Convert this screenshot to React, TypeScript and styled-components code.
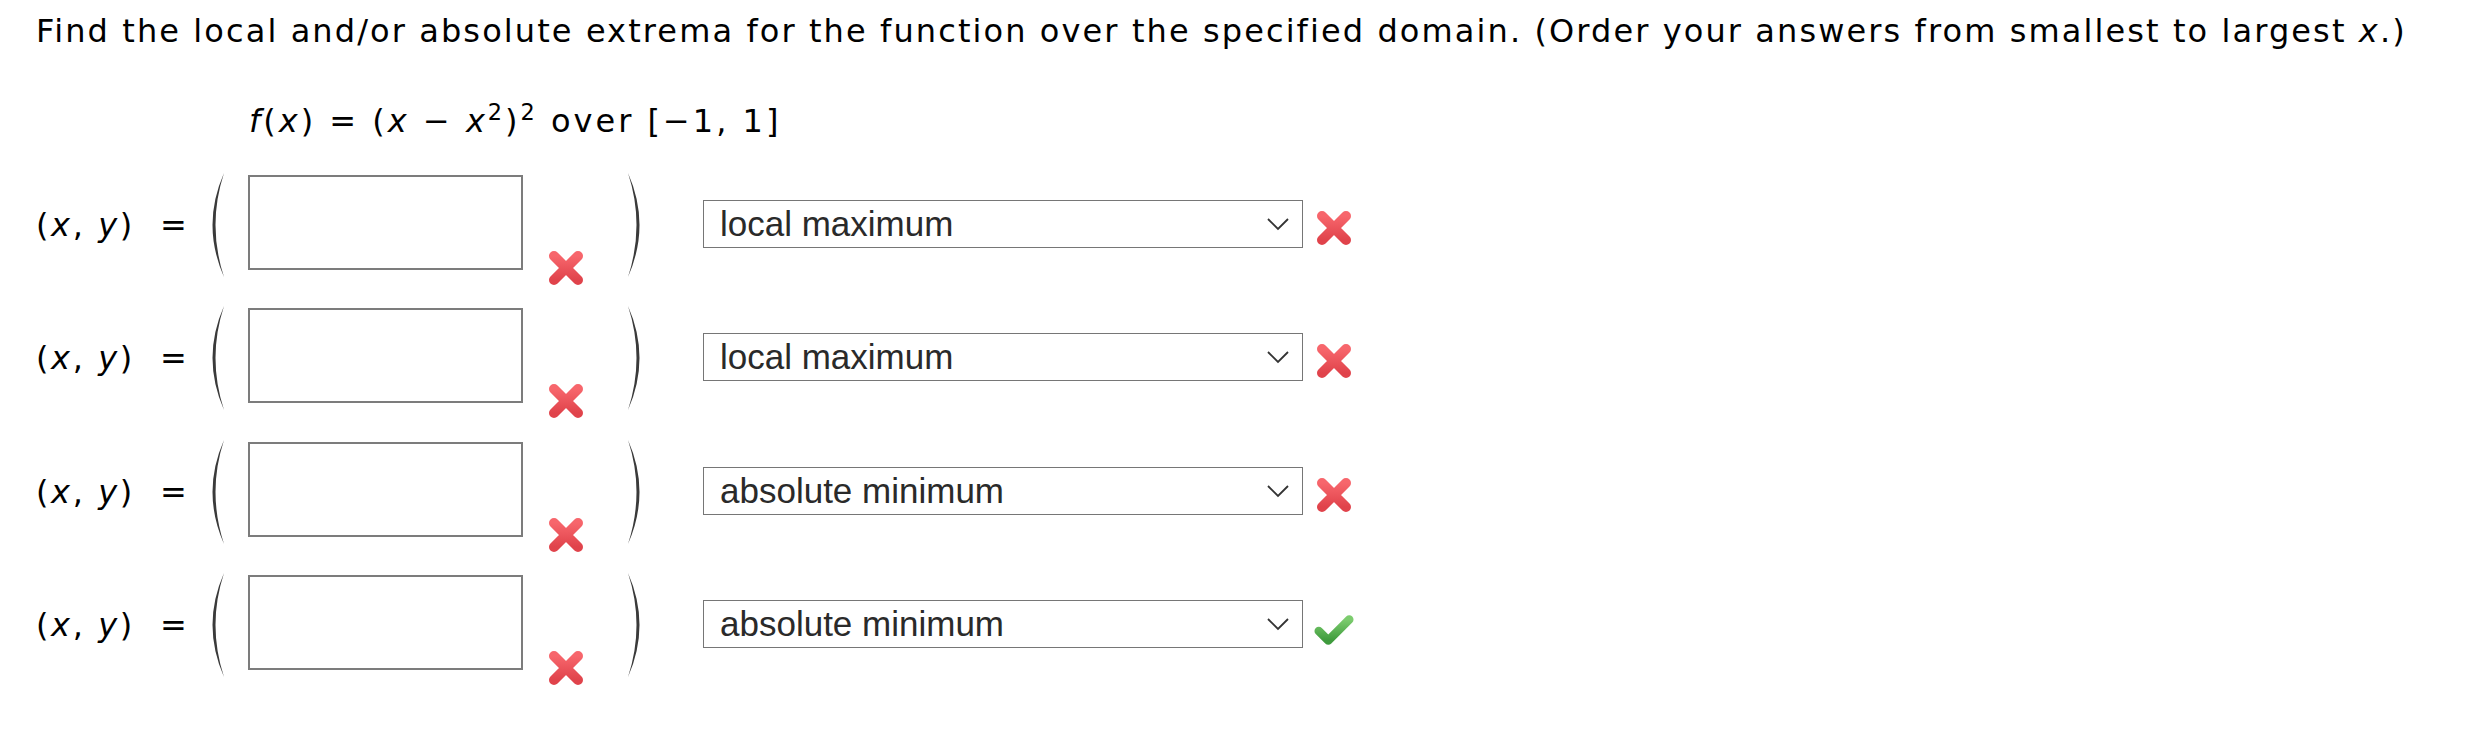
import React from 'react';
import styled, { createGlobalStyle } from 'styled-components';

const GlobalStyle = createGlobalStyle`
  html, body {
    margin: 0;
    padding: 0;
    background: #ffffff;
  }
  body {
    font-family: "DejaVu Sans", Verdana, sans-serif;
    color: #000;
  }
`;

const Page = styled.div`
  padding: 13px 0 0 36px;
  width: 2489px;
  height: 735px;
  box-sizing: border-box;
`;

const Question = styled.div`
  font-size: 32px;
  line-height: 36px;
  letter-spacing: 2.1px;
  white-space: nowrap;
`;

const Formula = styled.div`
  margin: 54px 0 0 213px;
  font-size: 32px;
  line-height: 36px;
  letter-spacing: 3px;
  white-space: nowrap;
`;

const Var = styled.i`
  font-style: italic;
`;

const Sup = styled.sup`
  font-size: 70%;
  line-height: 0;
  vertical-align: 0.55em;
`;

const Rows = styled.div`
  margin-top: 33px;
  display: flex;
  flex-direction: column;
  gap: 27.3px;
`;

const Row = styled.div`
  display: flex;
  align-items: flex-start;
  height: 106px;
`;

const PointLabel = styled.div`
  margin-top: 35px;
  width: 124px;
  font-size: 32px;
  line-height: 36px;
  letter-spacing: 2.6px;
  white-space: nowrap;
`;

const Equals = styled.div`
  margin-top: 35px;
  width: 42px;
  font-size: 32px;
  line-height: 36px;
`;

const Bracket = styled.div<{ $gap: number }>`
  display: block;
  flex: none;
  margin-left: ${(p) => p.$gap}px;
`;

const AnswerBox = styled.div`
  margin: 3px 0 0 22px;
  width: 275px;
  height: 95px;
  box-sizing: border-box;
  border: 2px solid #7c7c7c;
  background: #fff;
`;

const MarkSlot = styled.div<{ $top: number; $gap: number }>`
  margin: ${(p) => p.$top}px 0 0 ${(p) => p.$gap}px;
  width: 40px;
  height: 38px;
  flex: none;
  display: flex;
  align-items: center;
  justify-content: center;
`;

const Select = styled.div`
  margin: 28px 0 0 53px;
  width: 600px;
  height: 48px;
  box-sizing: border-box;
  border: 1.5px solid #767676;
  background: #fff;
  display: flex;
  align-items: center;
  justify-content: space-between;
  padding: 0 12px 0 16px;
  font-family: "Liberation Sans", Arial, sans-serif;
  font-size: 35px;
  color: #2a2a2a;
  white-space: nowrap;
`;

const Chevron = () => (
  <svg width="24" height="16" viewBox="0 0 24 16">
    <path d="M2 3 L12 13 L22 3" fill="none" stroke="#333" strokeWidth="1.8" />
  </svg>
);

const LeftParen = () => (
  <svg width="24" height="106" viewBox="0 0 24 106">
    <path d="M22 1 Q-1 53 22 105 Q5 53 22 1 Z" fill="#3a3a3a" />
  </svg>
);

const RightParen = () => (
  <svg width="24" height="106" viewBox="0 0 24 106">
    <path d="M2 1 Q25 53 2 105 Q19 53 2 1 Z" fill="#3a3a3a" />
  </svg>
);

const WrongMark = () => (
  <svg width="38" height="36" viewBox="0 0 38 36">
    <defs>
      <linearGradient id="xg" x1="0" y1="0" x2="0" y2="1">
        <stop offset="0" stopColor="#f7666c" />
        <stop offset="1" stopColor="#e0434b" />
      </linearGradient>
    </defs>
    <path d="M7 6 L31 30 M31 6 L7 30" stroke="url(#xg)" strokeWidth="10" strokeLinecap="round" fill="none" />
  </svg>
);

const RightMark = () => (
  <svg width="42" height="36" viewBox="0 0 42 36">
    <defs>
      <linearGradient id="cg" x1="0" y1="0" x2="0" y2="1">
        <stop offset="0" stopColor="#7ccc6e" />
        <stop offset="1" stopColor="#3f9b3d" />
      </linearGradient>
    </defs>
    <path d="M5 19 L15 29 L37 7" stroke="url(#cg)" strokeWidth="9" strokeLinecap="round" strokeLinejoin="round" fill="none" />
  </svg>
);

const answers = [
  { label: 'local maximum', correct: false },
  { label: 'local maximum', correct: false },
  { label: 'absolute minimum', correct: false },
  { label: 'absolute minimum', correct: true },
];

export default function App() {
  return (
    <>
      <GlobalStyle />
      <Page>
        <Question>
          Find the local and/or absolute extrema for the function over the specified domain. (Order your answers from
          smallest to largest <Var>x</Var>.)
        </Question>
        <Formula>
          <Var>f</Var>(<Var>x</Var>) = (<Var>x</Var> − <Var>x</Var>
          <Sup>2</Sup>)<Sup>2</Sup> over [−1, 1]
        </Formula>
        <Rows>
          {answers.map((a, i) => (
            <Row key={i}>
              <PointLabel>
                (<Var>x</Var>, <Var>y</Var>)
              </PointLabel>
              <Equals>=</Equals>
              <Bracket $gap={0}>
                <LeftParen />
              </Bracket>
              <AnswerBox />
              <MarkSlot $top={77} $gap={23}>
                <WrongMark />
              </MarkSlot>
              <Bracket $gap={40}>
                <RightParen />
              </Bracket>
              <Select>
                <span>{a.label}</span>
                <Chevron />
              </Select>
              <MarkSlot $top={a.correct ? 39 : 37} $gap={11}>
                {a.correct ? <RightMark /> : <WrongMark />}
              </MarkSlot>
            </Row>
          ))}
        </Rows>
      </Page>
    </>
  );
}
